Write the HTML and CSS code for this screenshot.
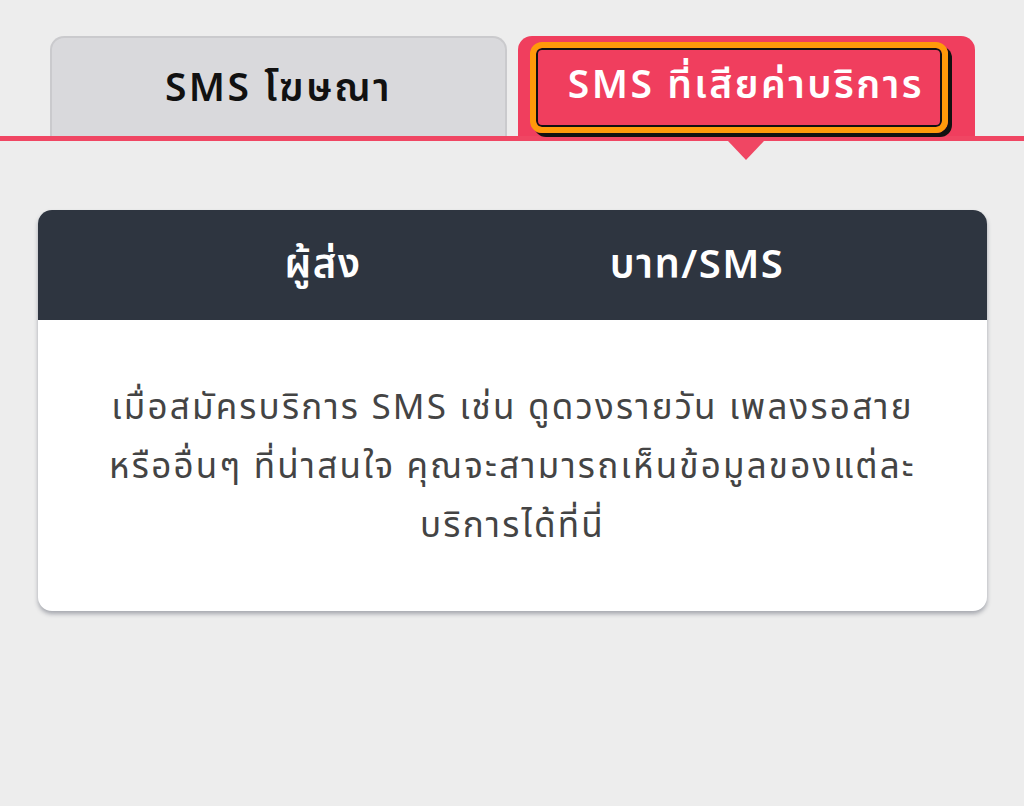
FILE: index.html
```html
<!DOCTYPE html>
<html lang="th">
<head>
<meta charset="utf-8">
<link rel="stylesheet" href="styles.css">
</head>
<body>
<div class="tabs">
  <div class="tab tab-inactive">SMS โฆษณา</div>
  <div class="tab tab-active"><span class="focus">SMS ที่เสียค่าบริการ</span></div>
</div>
<div class="card">
  <div class="card-head">
    <div class="col">ผู้ส่ง</div>
    <div class="col">บาท/SMS</div>
  </div>
  <div class="card-body">
    <p>เมื่อสมัครบริการ SMS เช่น ดูดวงรายวัน เพลงรอสาย<br>หรืออื่นๆ ที่น่าสนใจ คุณจะสามารถเห็นข้อมูลของแต่ละ<br>บริการได้ที่นี่</p>
  </div>
</div>
</body>
</html>
```
FILE: styles.css
```css
html, body {
  margin: 0;
  padding: 0;
  background: #ededed;
  font-family: "Noto Sans", "Noto Sans Thai", "Open Sans", sans-serif;
  width: 1024px;
  height: 806px;
  overflow: hidden;
}
.tabs {
  display: flex;
  gap: 11px;
  padding: 36px 0 0 50px;
  border-bottom: 5px solid #f04663;
  height: 100px;
}
.tab {
  width: 457px;
  box-sizing: border-box;
  display: flex;
  align-items: center;
  justify-content: center;
  font-weight: 600;
  font-size: 39px;
  letter-spacing: 2.5px;
  border-radius: 14px 14px 0 0;
}
.tab-inactive {
  background: #d9d9dc;
  border: 2px solid #cacacd;
  border-bottom: none;
  color: #111;
  padding-top: 4px;
}
.tab-active {
  background: #f03e5e;
  color: #fff;
  position: relative;
  padding: 6px 27px 3px 12px;
  align-items: stretch;
}
.tab-active::after {
  content: "";
  position: absolute;
  left: 210px;
  bottom: -24px;
  border-left: 18px solid transparent;
  border-right: 18px solid transparent;
  border-top: 19px solid #f04663;
}
.focus {
  flex: 1;
  display: flex;
  align-items: center;
  justify-content: center;
  border: 6px solid #ff9a0a;
  border-radius: 12px;
  box-shadow: inset 0 0 0 2px #111, 4px 4px 0 #111;
  padding: 0 0 4px 14px;
}
.card {
  margin: 69px 0 0 38px;
  width: 949px;
  background: #fff;
  border-radius: 14px;
  overflow: hidden;
  box-shadow: 0 3px 4px rgba(80, 85, 100, 0.45);
}
.card-head {
  background: #2e3540;
  height: 110px;
  display: flex;
  align-items: center;
  padding-left: 98px;
  color: #fff;
  font-weight: 600;
  font-size: 40px;
  letter-spacing: 1.5px;
}
.card-head .col {
  width: 374px;
  text-align: center;
}
.card-body {
  padding: 56px 20px 58px;
  text-align: center;
}
.card-body p {
  margin: 0;
  color: #444;
  font-size: 35px;
  line-height: 59px;
  letter-spacing: 2.2px;
}
```
